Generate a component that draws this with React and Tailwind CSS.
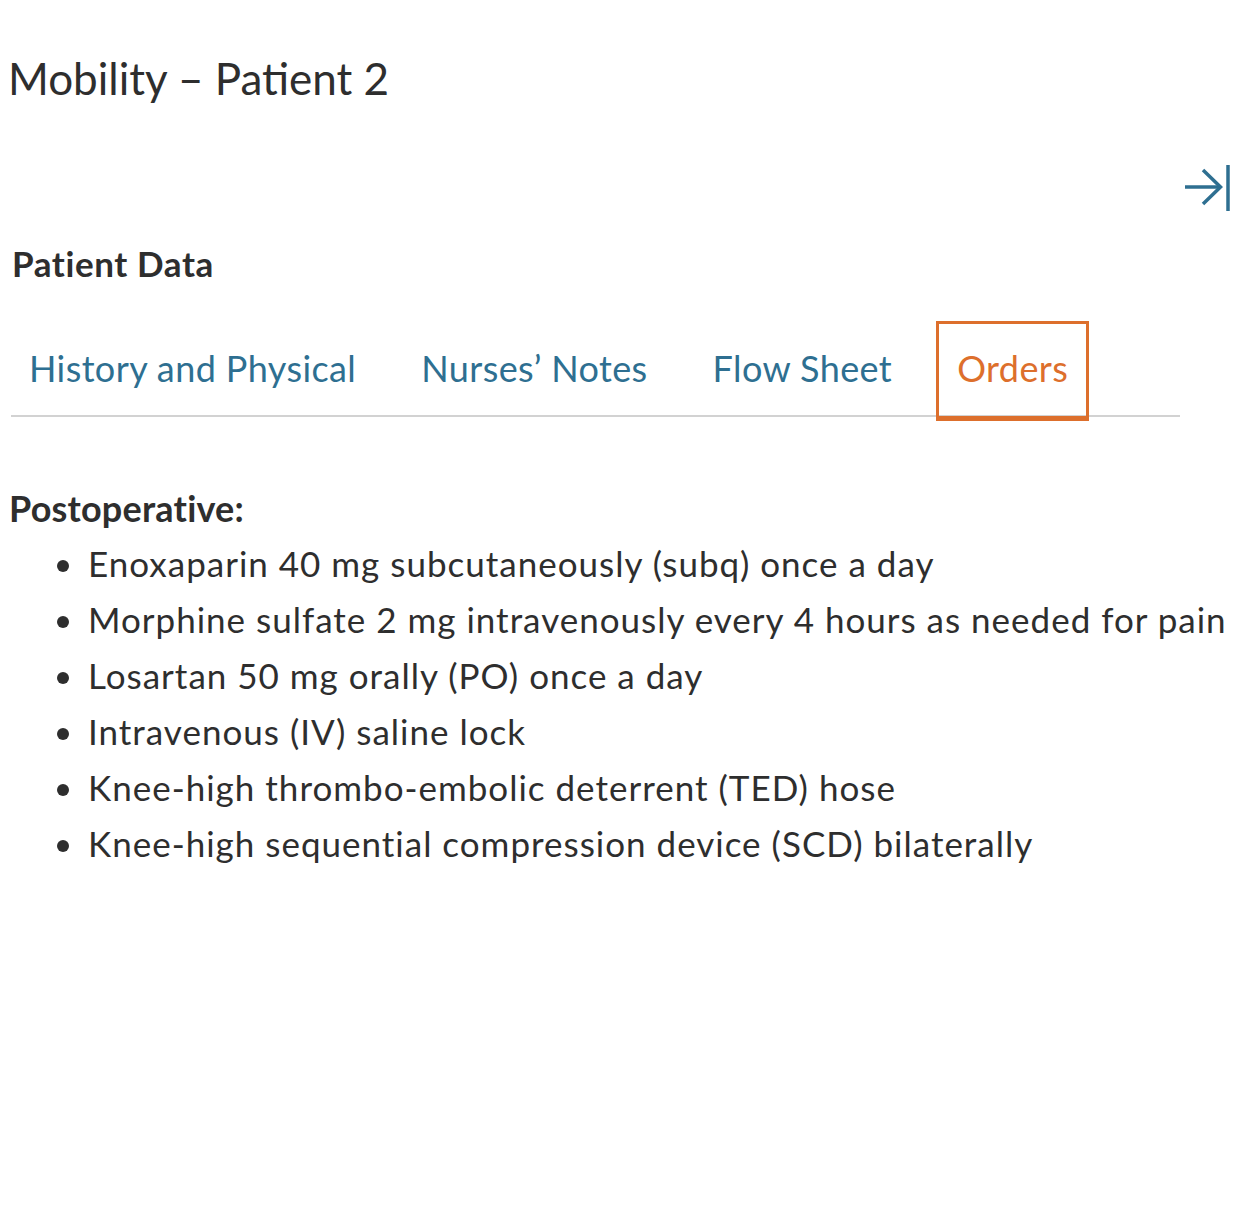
import React from 'react';

const orders = [
  'Enoxaparin 40 mg subcutaneously (subq) once a day',
  'Morphine sulfate 2 mg intravenously every 4 hours as needed for pain',
  'Losartan 50 mg orally (PO) once a day',
  'Intravenous (IV) saline lock',
  'Knee-high thrombo-embolic deterrent (TED) hose',
  'Knee-high sequential compression device (SCD) bilaterally',
];

const tabs = ['History and Physical', 'Nurses’ Notes', 'Flow Sheet', 'Orders'];

const ExpandIcon = () => (
  <svg width="48" height="48" viewBox="0 0 48 48" fill="none" stroke="#2e6f91" strokeWidth="3.5">
    <path d="M2 23h36" />
    <path d="M20 6l17.5 17L20 40" />
    <path d="M45 1v46" />
  </svg>
);

const App = () => {
  const active = 'Orders';

  return (
    <div className="min-h-screen bg-white text-[#2e2e2e]" style={{ fontFamily: 'Lato, "Noto Sans", sans-serif' }}>
      <h1 className="pl-[8px] pt-[50px] text-[44px] leading-[56px] font-normal">Mobility – Patient 2</h1>

      <div className="flex justify-end pr-[22px] mt-[58px]">
        <ExpandIcon />
      </div>

      <h2 className="pl-[12px] mt-[29px] text-[35px] leading-[44px] font-bold tracking-[0.6px]">Patient Data</h2>

      <div className="mt-[36px] ml-[11px] w-[1169px] border-b-2 border-[#d2d2d2]">
        <div className="-ml-[3px] flex items-end gap-[23px]">
          {tabs.map((t) => {
            const on = t === active;
            return (
              <button
                key={t}
                type="button"
                className={
                  on
                    ? 'relative -mb-[6px] px-[18px] pb-[5px] h-[100px] border-[3px] border-b-[5px] border-[#dd6f2c] text-[#dd6f2c] text-[36px] tracking-[0.4px]'
                    : 'relative -mb-[6px] px-[18px] pb-[5px] h-[100px] border-[3px] border-b-[5px] border-transparent text-[#2e6f91] text-[36px] tracking-[0.4px]'
                }
              >
                {t}
              </button>
            );
          })}
        </div>
      </div>

      <div className="pl-[9px] mt-[69px]">
        <p className="text-[36px] leading-[44px] font-bold tracking-[0.2px]">Postoperative:</p>
        <ul className="mt-[5px] list-disc pl-[78px] text-[35px] leading-[56px] tracking-[1px]">
          {orders.map((o) => (
            <li key={o} className="pl-[1px]">{o}</li>
          ))}
        </ul>
      </div>
    </div>
  );
};

export default App;
